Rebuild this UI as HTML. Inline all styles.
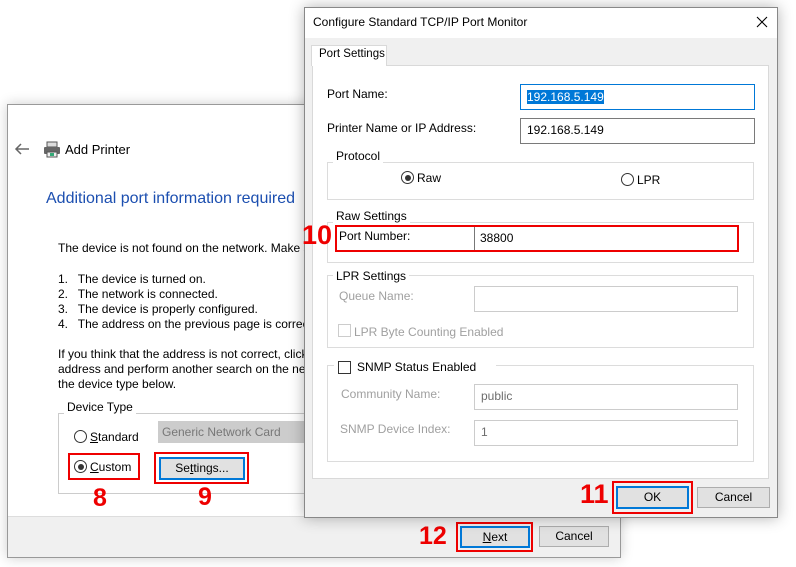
<!DOCTYPE html>
<html><head><meta charset="utf-8"><style>
*{box-sizing:border-box;margin:0;padding:0}
body{width:796px;height:567px;background:#fff;position:relative;overflow:hidden;font-family:"Liberation Sans",sans-serif;font-size:12px;color:#000}
.a{position:absolute;white-space:nowrap}
.wiz{position:absolute;left:7px;top:104px;width:614px;height:454px;background:#fff;border:1px solid #999;box-shadow:0 0 12px rgba(0,0,0,.2)}
.band{position:absolute;left:8px;top:516px;width:612px;height:41px;background:#f0f0f0;border-top:1px solid #ddd}
.dlg{position:absolute;left:304px;top:7px;width:474px;height:511px;background:#f0f0f0;border:1px solid #888;box-shadow:0 0 14px rgba(0,0,0,.3)}
.title{position:absolute;left:305px;top:8px;width:472px;height:30px;background:#fff}
.panel{position:absolute;left:312px;top:65px;width:457px;height:414px;background:#fff;border:1px solid #d9d9d9}
.tab{position:absolute;left:311px;top:45px;width:76px;height:21px;background:#fff;border:1px solid #d9d9d9;border-bottom:none}
.grp{position:absolute;border:1px solid #dcdcdc}
.lbl{position:absolute;background:#fff;padding:0 3px;white-space:nowrap}
.inp{position:absolute;background:#fff;border:1px solid #7a7a7a;padding:0 6px;line-height:22px}
.dis{border-color:#ccc;color:#6d6d6d}
.g{color:#a0a0a0}
.btn{position:absolute;background:#e1e1e1;border:1px solid #adadad;text-align:center}
.blue{border:2px solid #0078d7}
.red{position:absolute;border:2px solid #e00}
.num{position:absolute;color:#e00;font-weight:bold;font-size:25px}
.rad{position:absolute;width:13px;height:13px;border:1px solid #333;border-radius:50%;background:#fff}
.rad.on::after{content:"";position:absolute;left:2.5px;top:2.5px;width:6px;height:6px;border-radius:50%;background:#333}
.chk{position:absolute;width:13px;height:13px;border:1px solid #333;background:#fff}
</style></head><body>
<div class="wiz"></div>
<div class="band"></div>
<svg class="a" style="left:14px;top:143px" width="16" height="12"><path d="M15 6H2M7 1L2 6l5 5" stroke="#666" stroke-width="1.5" fill="none"/></svg>
<svg class="a" style="left:43px;top:141px" width="18" height="17"><rect x="4" y="1" width="10" height="5" fill="#ddd" stroke="#555"/><rect x="1" y="6" width="16" height="7" rx="1" fill="#666"/><rect x="4" y="11" width="10" height="5" fill="#eee" stroke="#555"/><rect x="7" y="12" width="4" height="3" fill="#3a7"/></svg>
<div class="a" style="left:65px;top:142px;font-size:13px">Add Printer</div>
<div class="a" style="left:46px;top:190px;font-size:16px;color:#1c4fb0">Additional port information required</div>
<div class="a" style="left:58px;top:241px">The device is not found on the network. Make s</div>
<div class="a" style="left:58px;top:272px;line-height:15px">1.&nbsp;&nbsp; The device is turned on.<br>2.&nbsp;&nbsp; The network is connected.<br>3.&nbsp;&nbsp; The device is properly configured.<br>4.&nbsp;&nbsp; The address on the previous page is correct.</div>
<div class="a" style="left:58px;top:347px;line-height:15px">If you think that the address is not correct, click<br>address and perform another search on the net<br>the device type below.</div>
<div class="grp" style="left:58px;top:413px;width:260px;height:81px;border-color:#ccc"></div>
<div class="lbl" style="left:64px;top:400px;font-size:12px">Device Type</div>
<div class="rad" style="left:74px;top:430px"></div><div class="a" style="left:90px;top:430px"><u>S</u>tandard</div>
<div class="a" style="left:158px;top:421px;width:150px;height:22px;background:#ccc;color:#777;padding:4px 4px;font-size:12px">Generic Network Card</div>
<div class="rad on" style="left:74px;top:460px"></div><div class="a" style="left:90px;top:460px"><u>C</u>ustom</div>
<div class="red" style="left:68px;top:453px;width:72px;height:27px"></div>
<div class="btn blue" style="left:159px;top:457px;width:86px;height:23px;line-height:19px">Se<u>t</u>tings...</div>
<div class="red" style="left:154px;top:452px;width:95px;height:32px"></div>
<div class="num" style="left:93px;top:484px">8</div>
<div class="num" style="left:198px;top:483px">9</div>
<div class="btn blue" style="left:460px;top:526px;width:70px;height:22px;line-height:18px"><u>N</u>ext</div>
<div class="red" style="left:456px;top:522px;width:77px;height:30px"></div>
<div class="btn" style="left:539px;top:526px;width:70px;height:21px;line-height:19px">Cancel</div>
<div class="num" style="left:419px;top:522px">12</div>

<div class="dlg"></div>
<div class="title"></div>
<div class="a" style="left:313px;top:15px">Configure Standard TCP/IP Port Monitor</div>
<svg class="a" style="left:756px;top:16px" width="12" height="12"><path d="M1 1l10 10M11 1L1 11" stroke="#000" stroke-width="1.1"/></svg>
<div class="panel"></div>
<div class="tab"></div>
<div class="a" style="left:319px;top:48px;font-size:11.5px">Port Settings</div>
<div class="a" style="left:327px;top:87px">Port Name:</div>
<div class="inp" style="left:520px;top:84px;width:235px;height:26px;border-color:#0078d7;padding-top:1px"><span style="background:#0078d7;color:#fff;line-height:15px">192.168.5.149</span></div>
<div class="a" style="left:327px;top:121px">Printer Name or IP Address:</div>
<div class="inp" style="left:520px;top:118px;width:235px;height:26px">192.168.5.149</div>
<div class="grp" style="left:327px;top:162px;width:427px;height:38px"></div>
<div class="lbl" style="left:333px;top:149px">Protocol</div>
<div class="rad on" style="left:401px;top:171px"></div><div class="a" style="left:417px;top:171px">Raw</div>
<div class="rad" style="left:621px;top:173px"></div><div class="a" style="left:637px;top:173px">LPR</div>
<div class="grp" style="left:327px;top:222px;width:427px;height:41px"></div>
<div class="lbl" style="left:333px;top:209px">Raw Settings</div>
<div class="a" style="left:339px;top:229px">Port Number:</div>
<div class="a" style="left:474px;top:226px;width:1px;height:25px;background:#777"></div>
<div class="a" style="left:480px;top:231px">38800</div>
<div class="red" style="left:335px;top:225px;width:404px;height:27px"></div>
<div class="num" style="left:302px;top:220px;font-size:27px">10</div>
<div class="grp" style="left:327px;top:275px;width:427px;height:73px"></div>
<div class="lbl" style="left:333px;top:269px">LPR Settings</div>
<div class="a g" style="left:339px;top:289px">Queue Name:</div>
<div class="inp dis" style="left:474px;top:286px;width:264px;height:26px"></div>
<div class="chk" style="left:338px;top:324px;border-color:#ccc"></div><div class="a g" style="left:354px;top:325px">LPR Byte Counting Enabled</div>
<div class="grp" style="left:327px;top:365px;width:427px;height:97px"></div>
<div class="lbl" style="left:334px;top:360px;padding-right:20px">&nbsp;&nbsp;&nbsp;&nbsp;&nbsp; SNMP Status Enabled</div>
<div class="chk" style="left:338px;top:361px"></div>
<div class="a g" style="left:341px;top:387px">Community Name:</div>
<div class="inp dis" style="left:474px;top:384px;width:264px;height:26px">public</div>
<div class="a g" style="left:340px;top:422px">SNMP Device Index:</div>
<div class="inp dis" style="left:474px;top:420px;width:264px;height:26px">1</div>
<div class="btn blue" style="left:616px;top:486px;width:73px;height:23px;line-height:19px">OK</div>
<div class="red" style="left:612px;top:481px;width:81px;height:33px"></div>
<div class="btn" style="left:697px;top:487px;width:73px;height:21px;line-height:19px">Cancel</div>
<div class="num" style="left:580px;top:479px;font-size:27px">11</div>
</body></html>
